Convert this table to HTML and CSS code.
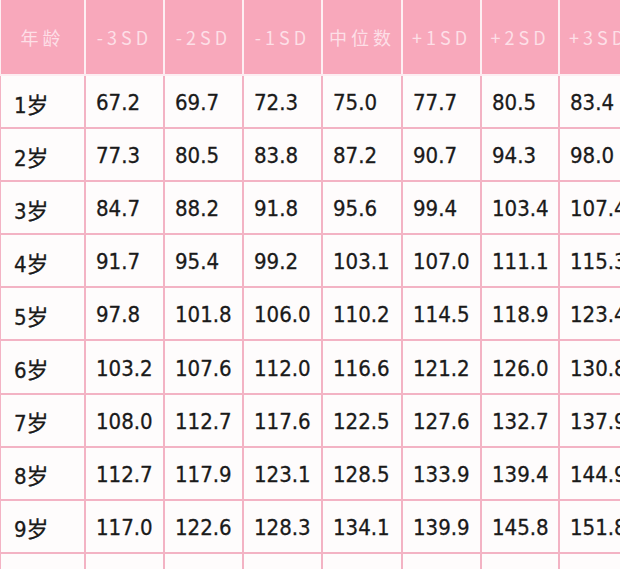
FILE: index.html
```html
<!DOCTYPE html>
<html lang="zh">
<head>
<meta charset="utf-8">
<title>儿童身高标准差</title>
<link rel="stylesheet" href="styles.css">
</head>
<body>
<table class="chart">
  <colgroup>
    <col class="c-age">
    <col class="c-w79">
    <col class="c-w79">
    <col class="c-w79">
    <col class="c-w80">
    <col class="c-w79">
    <col class="c-w78">
    <col class="c-w79">
  </colgroup>
  <thead>
    <tr>
      <th>年龄</th>
      <th>-3SD</th>
      <th>-2SD</th>
      <th>-1SD</th>
      <th>中位数</th>
      <th>+1SD</th>
      <th>+2SD</th>
      <th>+3SD</th>
    </tr>
  </thead>
  <tbody>
    <tr><td>1岁</td><td>67.2</td><td>69.7</td><td>72.3</td><td>75.0</td><td>77.7</td><td>80.5</td><td>83.4</td></tr>
    <tr><td>2岁</td><td>77.3</td><td>80.5</td><td>83.8</td><td>87.2</td><td>90.7</td><td>94.3</td><td>98.0</td></tr>
    <tr><td>3岁</td><td>84.7</td><td>88.2</td><td>91.8</td><td>95.6</td><td>99.4</td><td>103.4</td><td>107.4</td></tr>
    <tr><td>4岁</td><td>91.7</td><td>95.4</td><td>99.2</td><td>103.1</td><td>107.0</td><td>111.1</td><td>115.3</td></tr>
    <tr><td>5岁</td><td>97.8</td><td>101.8</td><td>106.0</td><td>110.2</td><td>114.5</td><td>118.9</td><td>123.4</td></tr>
    <tr><td>6岁</td><td>103.2</td><td>107.6</td><td>112.0</td><td>116.6</td><td>121.2</td><td>126.0</td><td>130.8</td></tr>
    <tr><td>7岁</td><td>108.0</td><td>112.7</td><td>117.6</td><td>122.5</td><td>127.6</td><td>132.7</td><td>137.9</td></tr>
    <tr><td>8岁</td><td>112.7</td><td>117.9</td><td>123.1</td><td>128.5</td><td>133.9</td><td>139.4</td><td>144.9</td></tr>
    <tr><td>9岁</td><td>117.0</td><td>122.6</td><td>128.3</td><td>134.1</td><td>139.9</td><td>145.8</td><td>151.8</td></tr>
    <tr><td>10岁</td><td></td><td></td><td></td><td></td><td></td><td></td><td></td></tr>
  </tbody>
</table>
</body>
</html>
```

FILE: styles.css
```css
html, body {
  margin: 0;
  padding: 0;
  background: #ffffff;
  overflow: hidden;
}

body {
  width: 620px;
  height: 569px;
}

.chart {
  border-collapse: collapse;
  table-layout: fixed;
  width: 637px;
  margin-left: -1px;
}

.c-age { width: 85px; }
.c-w79 { width: 79px; }
.c-w80 { width: 80px; }
.c-w78 { width: 78px; }

.chart th {
  height: 74px;
  padding: 0;
  background: #f8a8bb;
  border: 2px solid #fdeef2;
  border-top: none;
  color: #fddfe7;
  font-family: "Noto Sans CJK SC", "DejaVu Sans", sans-serif;
  font-size: 18px;
  font-weight: 400;
  letter-spacing: 4px;
  text-align: center;
  vertical-align: middle;
}

.chart td {
  height: 49.1px;
  padding: 2px 0 0 10px;
  background: #fefcfc;
  border: 2px solid #f3b3c4;
  color: #1a1a1a;
  -webkit-text-stroke: 0.3px #1a1a1a;
  font-family: "DejaVu Sans Condensed", "DejaVu Sans", "Noto Sans CJK SC", sans-serif;
  font-stretch: condensed;
  font-size: 22px;
  text-align: left;
  vertical-align: middle;
  white-space: nowrap;
  overflow: hidden;
}

.chart td:first-child {
  padding-left: 13px;
}
```
